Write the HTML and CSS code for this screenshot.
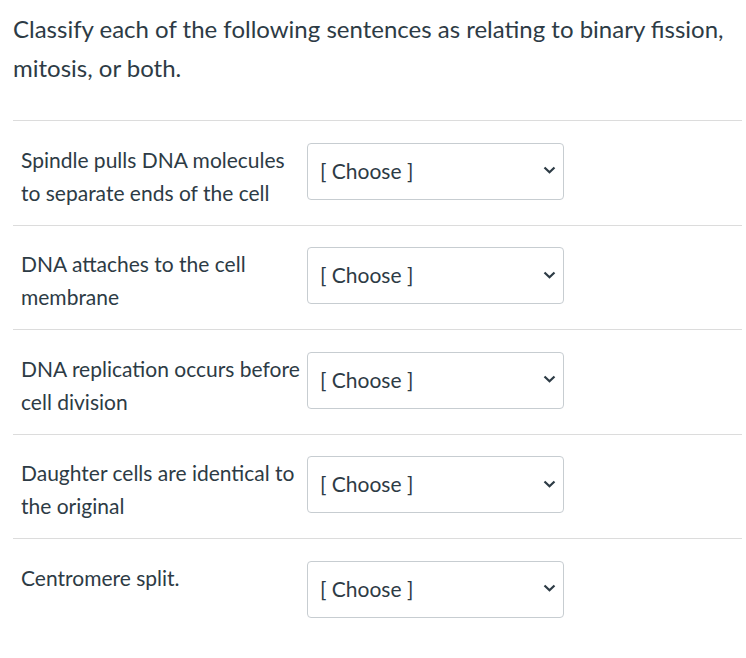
FILE: index.html
```html
<!DOCTYPE html>
<html>
<head>
<meta charset="utf-8">
<link rel="stylesheet" href="styles.css">
</head>
<body>
<div class="quiz">
  <p class="prompt">Classify each of the following sentences as relating to binary fission, mitosis, or both.</p>
  <div class="rows">
    <div class="row">
      <div class="label">Spindle pulls DNA molecules to separate ends of the cell</div>
      <div class="select"><span>[ Choose ]</span><svg class="chev" width="13" height="8" viewBox="0 0 13 8"><path d="M1.5 1.5 L6.5 6.3 L11.5 1.5" fill="none" stroke="#2d3b45" stroke-width="2.2"/></svg></div>
    </div>
    <div class="row">
      <div class="label">DNA attaches to the cell membrane</div>
      <div class="select"><span>[ Choose ]</span><svg class="chev" width="13" height="8" viewBox="0 0 13 8"><path d="M1.5 1.5 L6.5 6.3 L11.5 1.5" fill="none" stroke="#2d3b45" stroke-width="2.2"/></svg></div>
    </div>
    <div class="row">
      <div class="label">DNA replication occurs before cell division</div>
      <div class="select"><span>[ Choose ]</span><svg class="chev" width="13" height="8" viewBox="0 0 13 8"><path d="M1.5 1.5 L6.5 6.3 L11.5 1.5" fill="none" stroke="#2d3b45" stroke-width="2.2"/></svg></div>
    </div>
    <div class="row">
      <div class="label">Daughter cells are identical to the original</div>
      <div class="select"><span>[ Choose ]</span><svg class="chev" width="13" height="8" viewBox="0 0 13 8"><path d="M1.5 1.5 L6.5 6.3 L11.5 1.5" fill="none" stroke="#2d3b45" stroke-width="2.2"/></svg></div>
    </div>
    <div class="row">
      <div class="label">Centromere split.</div>
      <div class="select"><span>[ Choose ]</span><svg class="chev" width="13" height="8" viewBox="0 0 13 8"><path d="M1.5 1.5 L6.5 6.3 L11.5 1.5" fill="none" stroke="#2d3b45" stroke-width="2.2"/></svg></div>
    </div>
  </div>
</div>
</body>
</html>
```
FILE: styles.css
```css
html, body {
  margin: 0;
  padding: 0;
  background: #ffffff;
}
body {
  font-family: Lato, "Noto Sans", sans-serif;
  color: #2d3b45;
}
.quiz {
  padding: 9px 4px 0 13px;
}
.prompt {
  margin: 0;
  font-size: 24px;
  line-height: 39px;
}
.rows {
  margin-top: 33px;
}
.row {
  display: flex;
  align-items: flex-start;
  border-top: 1px solid #dcdcdc;
  padding: 21.5px 0 16px 8px;
}
.label {
  width: 286px;
  font-size: 21px;
  line-height: 33px;
}
.select {
  box-sizing: border-box;
  width: 257px;
  height: 57px;
  border: 1px solid #c7cdd1;
  border-radius: 4px;
  display: flex;
  align-items: center;
  justify-content: space-between;
  padding: 0 7px 2px 12px;
  font-size: 21px;
}
.chev {
  display: block;
}
```
